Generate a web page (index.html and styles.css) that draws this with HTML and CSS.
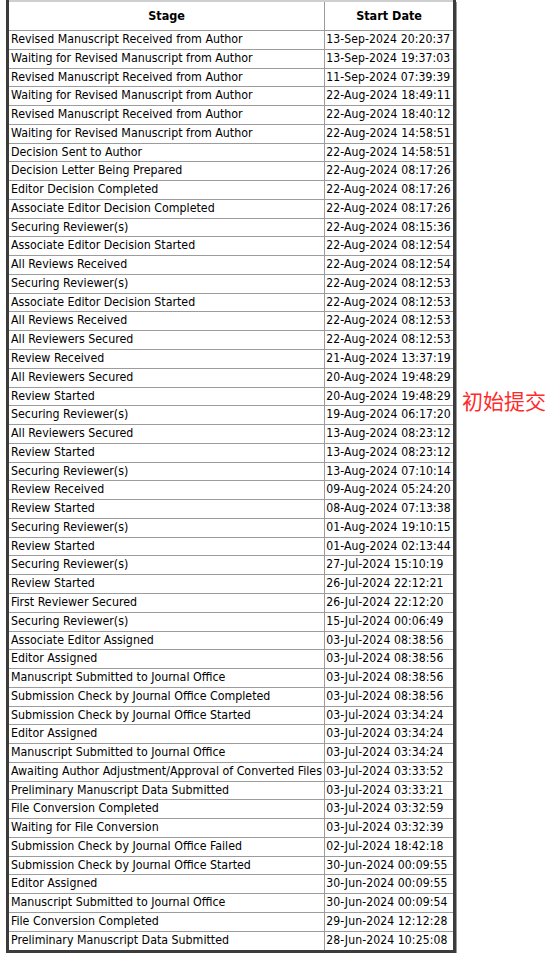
FILE: index.html
```html
<!DOCTYPE html>
<html>
<head>
<meta charset="utf-8">
<link rel="stylesheet" href="styles.css">
</head>
<body>
<div class="page">
<table class="history">
<colgroup><col class="c-stage"><col class="c-date"></colgroup>
<thead>
<tr><th>Stage</th><th>Start Date</th></tr>
</thead>
<tbody>
<tr><td>Revised Manuscript Received from Author</td><td class="date">13-Sep-2024 20:20:37</td></tr>
<tr><td>Waiting for Revised Manuscript from Author</td><td class="date">13-Sep-2024 19:37:03</td></tr>
<tr><td>Revised Manuscript Received from Author</td><td class="date">11-Sep-2024 07:39:39</td></tr>
<tr><td>Waiting for Revised Manuscript from Author</td><td class="date">22-Aug-2024 18:49:11</td></tr>
<tr><td>Revised Manuscript Received from Author</td><td class="date">22-Aug-2024 18:40:12</td></tr>
<tr><td>Waiting for Revised Manuscript from Author</td><td class="date">22-Aug-2024 14:58:51</td></tr>
<tr><td>Decision Sent to Author</td><td class="date">22-Aug-2024 14:58:51</td></tr>
<tr><td>Decision Letter Being Prepared</td><td class="date">22-Aug-2024 08:17:26</td></tr>
<tr><td>Editor Decision Completed</td><td class="date">22-Aug-2024 08:17:26</td></tr>
<tr><td>Associate Editor Decision Completed</td><td class="date">22-Aug-2024 08:17:26</td></tr>
<tr><td>Securing Reviewer(s)</td><td class="date">22-Aug-2024 08:15:36</td></tr>
<tr><td>Associate Editor Decision Started</td><td class="date">22-Aug-2024 08:12:54</td></tr>
<tr><td>All Reviews Received</td><td class="date">22-Aug-2024 08:12:54</td></tr>
<tr><td>Securing Reviewer(s)</td><td class="date">22-Aug-2024 08:12:53</td></tr>
<tr><td>Associate Editor Decision Started</td><td class="date">22-Aug-2024 08:12:53</td></tr>
<tr><td>All Reviews Received</td><td class="date">22-Aug-2024 08:12:53</td></tr>
<tr><td>All Reviewers Secured</td><td class="date">22-Aug-2024 08:12:53</td></tr>
<tr><td>Review Received</td><td class="date">21-Aug-2024 13:37:19</td></tr>
<tr><td>All Reviewers Secured</td><td class="date">20-Aug-2024 19:48:29</td></tr>
<tr><td>Review Started</td><td class="date">20-Aug-2024 19:48:29</td></tr>
<tr><td>Securing Reviewer(s)</td><td class="date">19-Aug-2024 06:17:20</td></tr>
<tr><td>All Reviewers Secured</td><td class="date">13-Aug-2024 08:23:12</td></tr>
<tr><td>Review Started</td><td class="date">13-Aug-2024 08:23:12</td></tr>
<tr><td>Securing Reviewer(s)</td><td class="date">13-Aug-2024 07:10:14</td></tr>
<tr><td>Review Received</td><td class="date">09-Aug-2024 05:24:20</td></tr>
<tr><td>Review Started</td><td class="date">08-Aug-2024 07:13:38</td></tr>
<tr><td>Securing Reviewer(s)</td><td class="date">01-Aug-2024 19:10:15</td></tr>
<tr><td>Review Started</td><td class="date">01-Aug-2024 02:13:44</td></tr>
<tr><td>Securing Reviewer(s)</td><td class="date">27-Jul-2024 15:10:19</td></tr>
<tr><td>Review Started</td><td class="date">26-Jul-2024 22:12:21</td></tr>
<tr><td>First Reviewer Secured</td><td class="date">26-Jul-2024 22:12:20</td></tr>
<tr><td>Securing Reviewer(s)</td><td class="date">15-Jul-2024 00:06:49</td></tr>
<tr><td>Associate Editor Assigned</td><td class="date">03-Jul-2024 08:38:56</td></tr>
<tr><td>Editor Assigned</td><td class="date">03-Jul-2024 08:38:56</td></tr>
<tr><td>Manuscript Submitted to Journal Office</td><td class="date">03-Jul-2024 08:38:56</td></tr>
<tr><td>Submission Check by Journal Office Completed</td><td class="date">03-Jul-2024 08:38:56</td></tr>
<tr><td>Submission Check by Journal Office Started</td><td class="date">03-Jul-2024 03:34:24</td></tr>
<tr><td>Editor Assigned</td><td class="date">03-Jul-2024 03:34:24</td></tr>
<tr><td>Manuscript Submitted to Journal Office</td><td class="date">03-Jul-2024 03:34:24</td></tr>
<tr><td>Awaiting Author Adjustment/Approval of Converted Files</td><td class="date">03-Jul-2024 03:33:52</td></tr>
<tr><td>Preliminary Manuscript Data Submitted</td><td class="date">03-Jul-2024 03:33:21</td></tr>
<tr><td>File Conversion Completed</td><td class="date">03-Jul-2024 03:32:59</td></tr>
<tr><td>Waiting for File Conversion</td><td class="date">03-Jul-2024 03:32:39</td></tr>
<tr><td>Submission Check by Journal Office Failed</td><td class="date">02-Jul-2024 18:42:18</td></tr>
<tr><td>Submission Check by Journal Office Started</td><td class="date">30-Jun-2024 00:09:55</td></tr>
<tr><td>Editor Assigned</td><td class="date">30-Jun-2024 00:09:55</td></tr>
<tr><td>Manuscript Submitted to Journal Office</td><td class="date">30-Jun-2024 00:09:54</td></tr>
<tr><td>File Conversion Completed</td><td class="date">29-Jun-2024 12:12:28</td></tr>
<tr><td>Preliminary Manuscript Data Submitted</td><td class="date">28-Jun-2024 10:25:08</td></tr>
</tbody>
</table>
<div class="note">初始提交</div>
</div>
</body>
</html>
```
FILE: styles.css
```css
html, body {
  margin: 0;
  padding: 0;
  background: #fff;
}
.page {
  display: flex;
  align-items: flex-start;
  padding: 0 0 0 6px;
}
.history {
  border-collapse: collapse;
  table-layout: fixed;
  width: 450px;
  border-top: 2px solid #cfcfcf;
  border-left: 3px solid #3c3c3c;
  border-right: 3px solid #3c3c3c;
  border-bottom: 3px solid #3c3c3c;
  box-shadow: 1px 2px 0 #9a9a9a;
  font-family: "DejaVu Sans Condensed", "DejaVu Sans", sans-serif;
  font-size: 12.3px;
  color: #000;
}
.c-stage { width: 315px; }
.c-date { width: 129px; }
.history th,
.history td {
  border: 1px solid #9c9c9c;
  padding: 0 0 0 2px;
  white-space: nowrap;
  overflow: hidden;
  text-align: left;
  line-height: 17.77px;
}
.history td.date {
  font-size: 12.1px;
  letter-spacing: 0.1px;
  padding-left: 1px;
}
.history th {
  text-align: center;
  font-weight: bold;
  font-size: 12.5px;
  height: 28px;
  line-height: 28px;
  padding: 0;
}
.note {
  margin: 389px 0 0 6px;
  font-family: "Noto Sans CJK SC", sans-serif;
  font-size: 21px;
  line-height: 22px;
  color: #ff2a2a;
  white-space: nowrap;
}
```
